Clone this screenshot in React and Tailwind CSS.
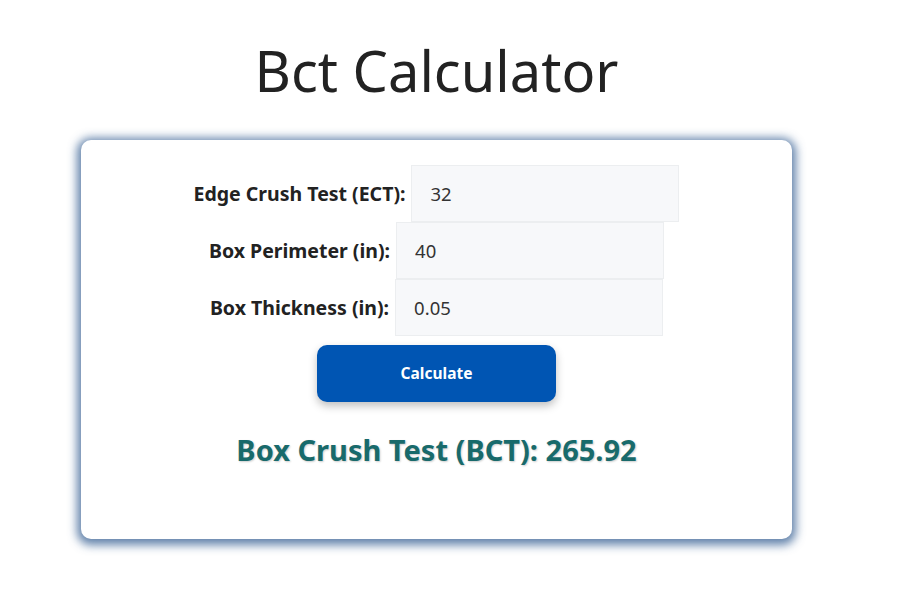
import React, { useState } from "react";

const fields = [
  { id: "ect", label: "Edge Crush Test (ECT):", value: "32" },
  { id: "perimeter", label: "Box Perimeter (in):", value: "40" },
  { id: "thickness", label: "Box Thickness (in):", value: "0.05" },
];

const App = () => {
  const [values, setValues] = useState({ ect: "32", perimeter: "40", thickness: "0.05" });

  return (
    <div className="min-h-screen w-full bg-white font-['Noto_Sans',sans-serif] text-[#222]">
      <div className="w-[873px] flex flex-col items-center">
        <h1 className="mt-[26px] text-[56px] leading-[88px] font-normal text-[#222]">Bct Calculator</h1>

        <div className="mt-[26px] w-[711px] h-[399px] bg-white rounded-[10px] shadow-[0_2px_10px_4px_rgba(60,100,150,0.8)] flex flex-col items-center pt-[25px]">
          {fields.map((f) => (
            <div className="flex items-center justify-center" key={f.id}>
              <label className="font-bold text-[19.5px] text-[#222] mr-[6px]">{f.label}</label>
              <input
                className="w-[268px] h-[57px] bg-[#f7f8fa] border border-[#eceef0] pl-[18px] text-[18.5px] text-[#333] outline-none"
                value={values[f.id]}
                onChange={(e) => setValues({ ...values, [f.id]: e.target.value })}
              />
            </div>
          ))}

          <button className="mt-[9px] w-[239px] h-[57px] bg-[#0055b3] rounded-[10px] text-white font-bold text-[15.5px] shadow-[0_4px_8px_rgba(0,0,0,0.25)]">
            Calculate
          </button>

          <p className="mt-[26px] font-bold text-[29px] text-[#186a6b] [text-shadow:1px_1px_2px_rgba(0,0,0,0.2)]">
            Box Crush Test (BCT): 265.92
          </p>
        </div>
      </div>
    </div>
  );
};

export default App;
